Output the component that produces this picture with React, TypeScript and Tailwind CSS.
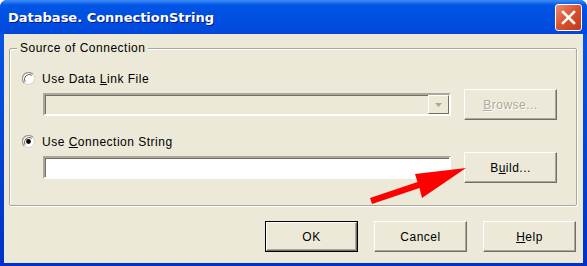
import React from "react";

const font = { fontFamily: '"Liberation Sans", Arial, sans-serif', letterSpacing: "0.5px" };

function Radio({ checked }: { checked?: boolean }) {
  return (
    <svg width="13" height="13" viewBox="0 0 13 13" className="shrink-0">
      <circle cx="6.5" cy="6.5" r="6" fill="#ffffff" stroke="#d4d0c8" strokeWidth="1" />
      <path d="M11 2.2 A6 6 0 0 0 2.2 11" fill="none" stroke="#9d9a8c" strokeWidth="1.2" />
      <path d="M9.8 3.2 A4.8 4.8 0 0 0 3.2 9.8" fill="none" stroke="#5f5d54" strokeWidth="1" />
      {checked && <circle cx="6.5" cy="6.5" r="2.4" fill="#000000" />}
    </svg>
  );
}

function Btn({
  children,
  disabled,
  def,
}: {
  children: React.ReactNode;
  disabled?: boolean;
  def?: boolean;
}) {
  const inner = (
    <div
      className={
        "flex items-center justify-center h-full w-full border border-t-white border-l-white border-b-[#716f64] border-r-[#716f64] bg-[#ece9d8] shadow-[inset_-1px_-1px_0_#aca899] text-[12px] " +
        (disabled ? "text-[#aca899] [text-shadow:1px_1px_0_#ffffff]" : "text-black")
      }
      style={font}
    >
      {children}
    </div>
  );
  if (def) {
    return <div className="w-[93px] h-[31px] border border-black">{inner}</div>;
  }
  return <div className="w-[93px] h-[31px]">{inner}</div>;
}

function Field({ disabled, combo }: { disabled?: boolean; combo?: boolean }) {
  return (
    <div
      className={
        "w-[408px] h-[23px] border-2 border-t-[#aca899] border-l-[#aca899] border-b-white border-r-white flex justify-end " +
        (disabled ? "bg-[#ece9d8]" : "bg-white")
      }
    >
      <div className="flex-1 h-full border-t border-l border-[#716f64]" />
      {combo && (
        <div className="w-[21px] h-full border border-t-white border-l-white border-b-[#716f64] border-r-[#716f64] flex items-center justify-center bg-[#ece9d8]">
          <svg width="7" height="4" viewBox="0 0 7 4">
            <path d="M0 0 H7 L3.5 4 Z" fill="#aca899" />
          </svg>
        </div>
      )}
    </div>
  );
}

export default function App() {
  return (
    <div className="relative w-[587px] h-[266px] overflow-hidden bg-white">
      <div className="flex flex-col w-full h-full rounded-t-[7px] bg-[#0842d9] bg-gradient-to-b from-[#0a5ae9] to-[#0031c8]">
        {/* title bar */}
        <div className="h-[34px] flex items-center justify-between pl-[8px] pr-[5px] rounded-t-[7px] bg-gradient-to-b from-[#3d8bf7] via-[#0055e5] via-15% to-[#0048dc]">
          <span
            className="text-white font-bold [text-shadow:1px_1px_0_#0a1883] pt-[1px]"
            style={{ fontFamily: '"DejaVu Sans", "Liberation Sans", sans-serif', fontSize: 13 }}
          >
            Database. ConnectionString
          </span>
          <div className="w-[27px] h-[27px] rounded-[3px] border border-white bg-gradient-to-br from-[#e98a6d] via-[#d9502c] to-[#c03a18] flex items-center justify-center mt-[1px]">
            <svg width="15" height="15" viewBox="0 0 15 15">
              <path d="M2 2 L13 13 M13 2 L2 13" stroke="#ffffff" strokeWidth="2.6" strokeLinecap="square" />
            </svg>
          </div>
        </div>

        {/* client */}
        <div className="flex-1 mx-[4px] mb-[3px] bg-[#ece9d8] flex flex-col">
          <div className="relative ml-[5px] mt-[14px] w-[568px] h-[158px] border border-[#aca899] shadow-[inset_1px_1px_0_#ffffff,1px_1px_0_#ffffff] rounded-[2px]">
            <span
              className="absolute left-[7px] top-[-8px] px-[3px] bg-[#ece9d8] text-[12px] leading-[14px] text-black"
              style={font}
            >
              Source of Connection
            </span>
            <div className="flex flex-col pl-[12px] pt-[22px]">
              <div className="flex items-center gap-[7px] h-[15px]">
                <Radio />
                <span className="text-[12px] text-black" style={font}>
                  Use Data <u>L</u>ink File
                </span>
              </div>
              <div className="flex items-center gap-[13px] ml-[21px] mt-[3px]">
                <Field disabled combo />
                <Btn disabled>
                  <span>
                    <u>B</u>rowse...
                  </span>
                </Btn>
              </div>
              <div className="flex items-center gap-[7px] h-[15px] mt-[14px]">
                <Radio checked />
                <span className="text-[12px] text-black" style={font}>
                  Use <u>C</u>onnection String
                </span>
              </div>
              <div className="flex items-center gap-[13px] ml-[21px] mt-[3px]">
                <Field />
                <Btn>
                  <span>
                    B<u>u</u>ild...
                  </span>
                </Btn>
              </div>
            </div>
          </div>

          <div className="flex justify-end gap-[16px] pr-[7px] mt-[15px]">
            <Btn def>OK</Btn>
            <Btn>Cancel</Btn>
            <Btn>
              <span>
                <u>H</u>elp
              </span>
            </Btn>
          </div>
        </div>
      </div>

      {/* annotation arrow */}
      <svg className="absolute inset-0 pointer-events-none" width="587" height="266" viewBox="0 0 587 266">
        <polygon
          points="370,198 417.5,182 415,174 466,168 422,198 419.5,188 372,204"
          fill="#ff0000"
        />
      </svg>
    </div>
  );
}
